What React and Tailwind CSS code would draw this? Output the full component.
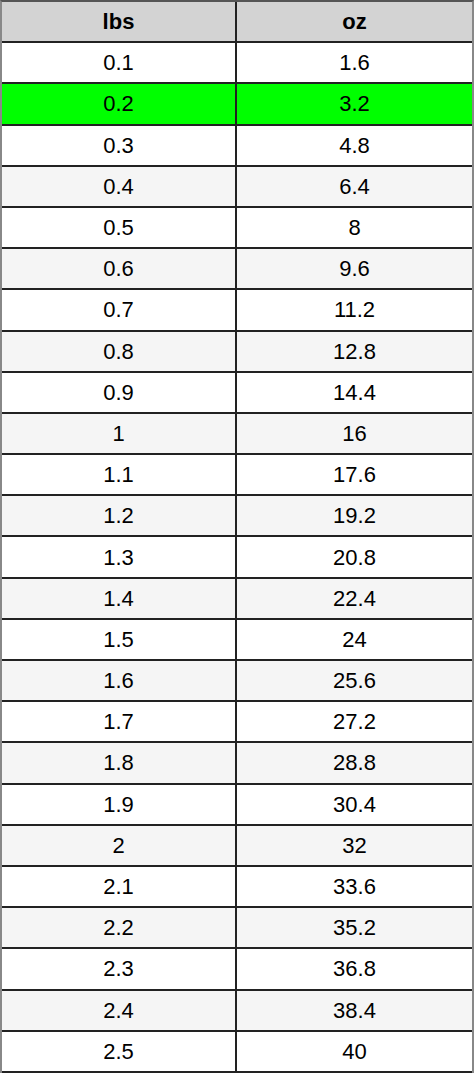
const rows = [
  [0.1, 1.6], [0.2, 3.2], [0.3, 4.8], [0.4, 6.4], [0.5, 8], [0.6, 9.6], [0.7, 11.2], [0.8, 12.8], [0.9, 14.4], [1, 16],
  [1.1, 17.6], [1.2, 19.2], [1.3, 20.8], [1.4, 22.4], [1.5, 24], [1.6, 25.6], [1.7, 27.2], [1.8, 28.8], [1.9, 30.4], [2, 32],
  [2.1, 33.6], [2.2, 35.2], [2.3, 36.8], [2.4, 38.4], [2.5, 40],
];

export default function App() {
  return (
    <div className="w-[474px] bg-white font-['Liberation_Sans',Arial,sans-serif] text-[22px] text-black">
      <div className="border-t-2 border-x-2 border-t-[#555] border-x-[#888]">
        <div className="grid grid-cols-2 h-[41.2px] bg-[#d3d3d3] border-b-2 border-[#222] font-bold">
          <div className="flex items-center justify-center border-r-2 border-[#222]">lbs</div>
          <div className="flex items-center justify-center">oz</div>
        </div>
        {rows.map(([lbs, oz], i) => {
          const bg = lbs === 0.2 ? "bg-[#00ff00]" : i % 2 === 1 ? "bg-[#f5f5f5]" : "bg-white";
          return (
            <div key={i} className={`grid grid-cols-2 h-[41.2px] border-b-2 border-[#222] ${bg}`}>
              <div className="flex items-center justify-center border-r-2 border-[#222]">{lbs}</div>
              <div className="flex items-center justify-center">{oz}</div>
            </div>
          );
        })}
      </div>
    </div>
  );
}
